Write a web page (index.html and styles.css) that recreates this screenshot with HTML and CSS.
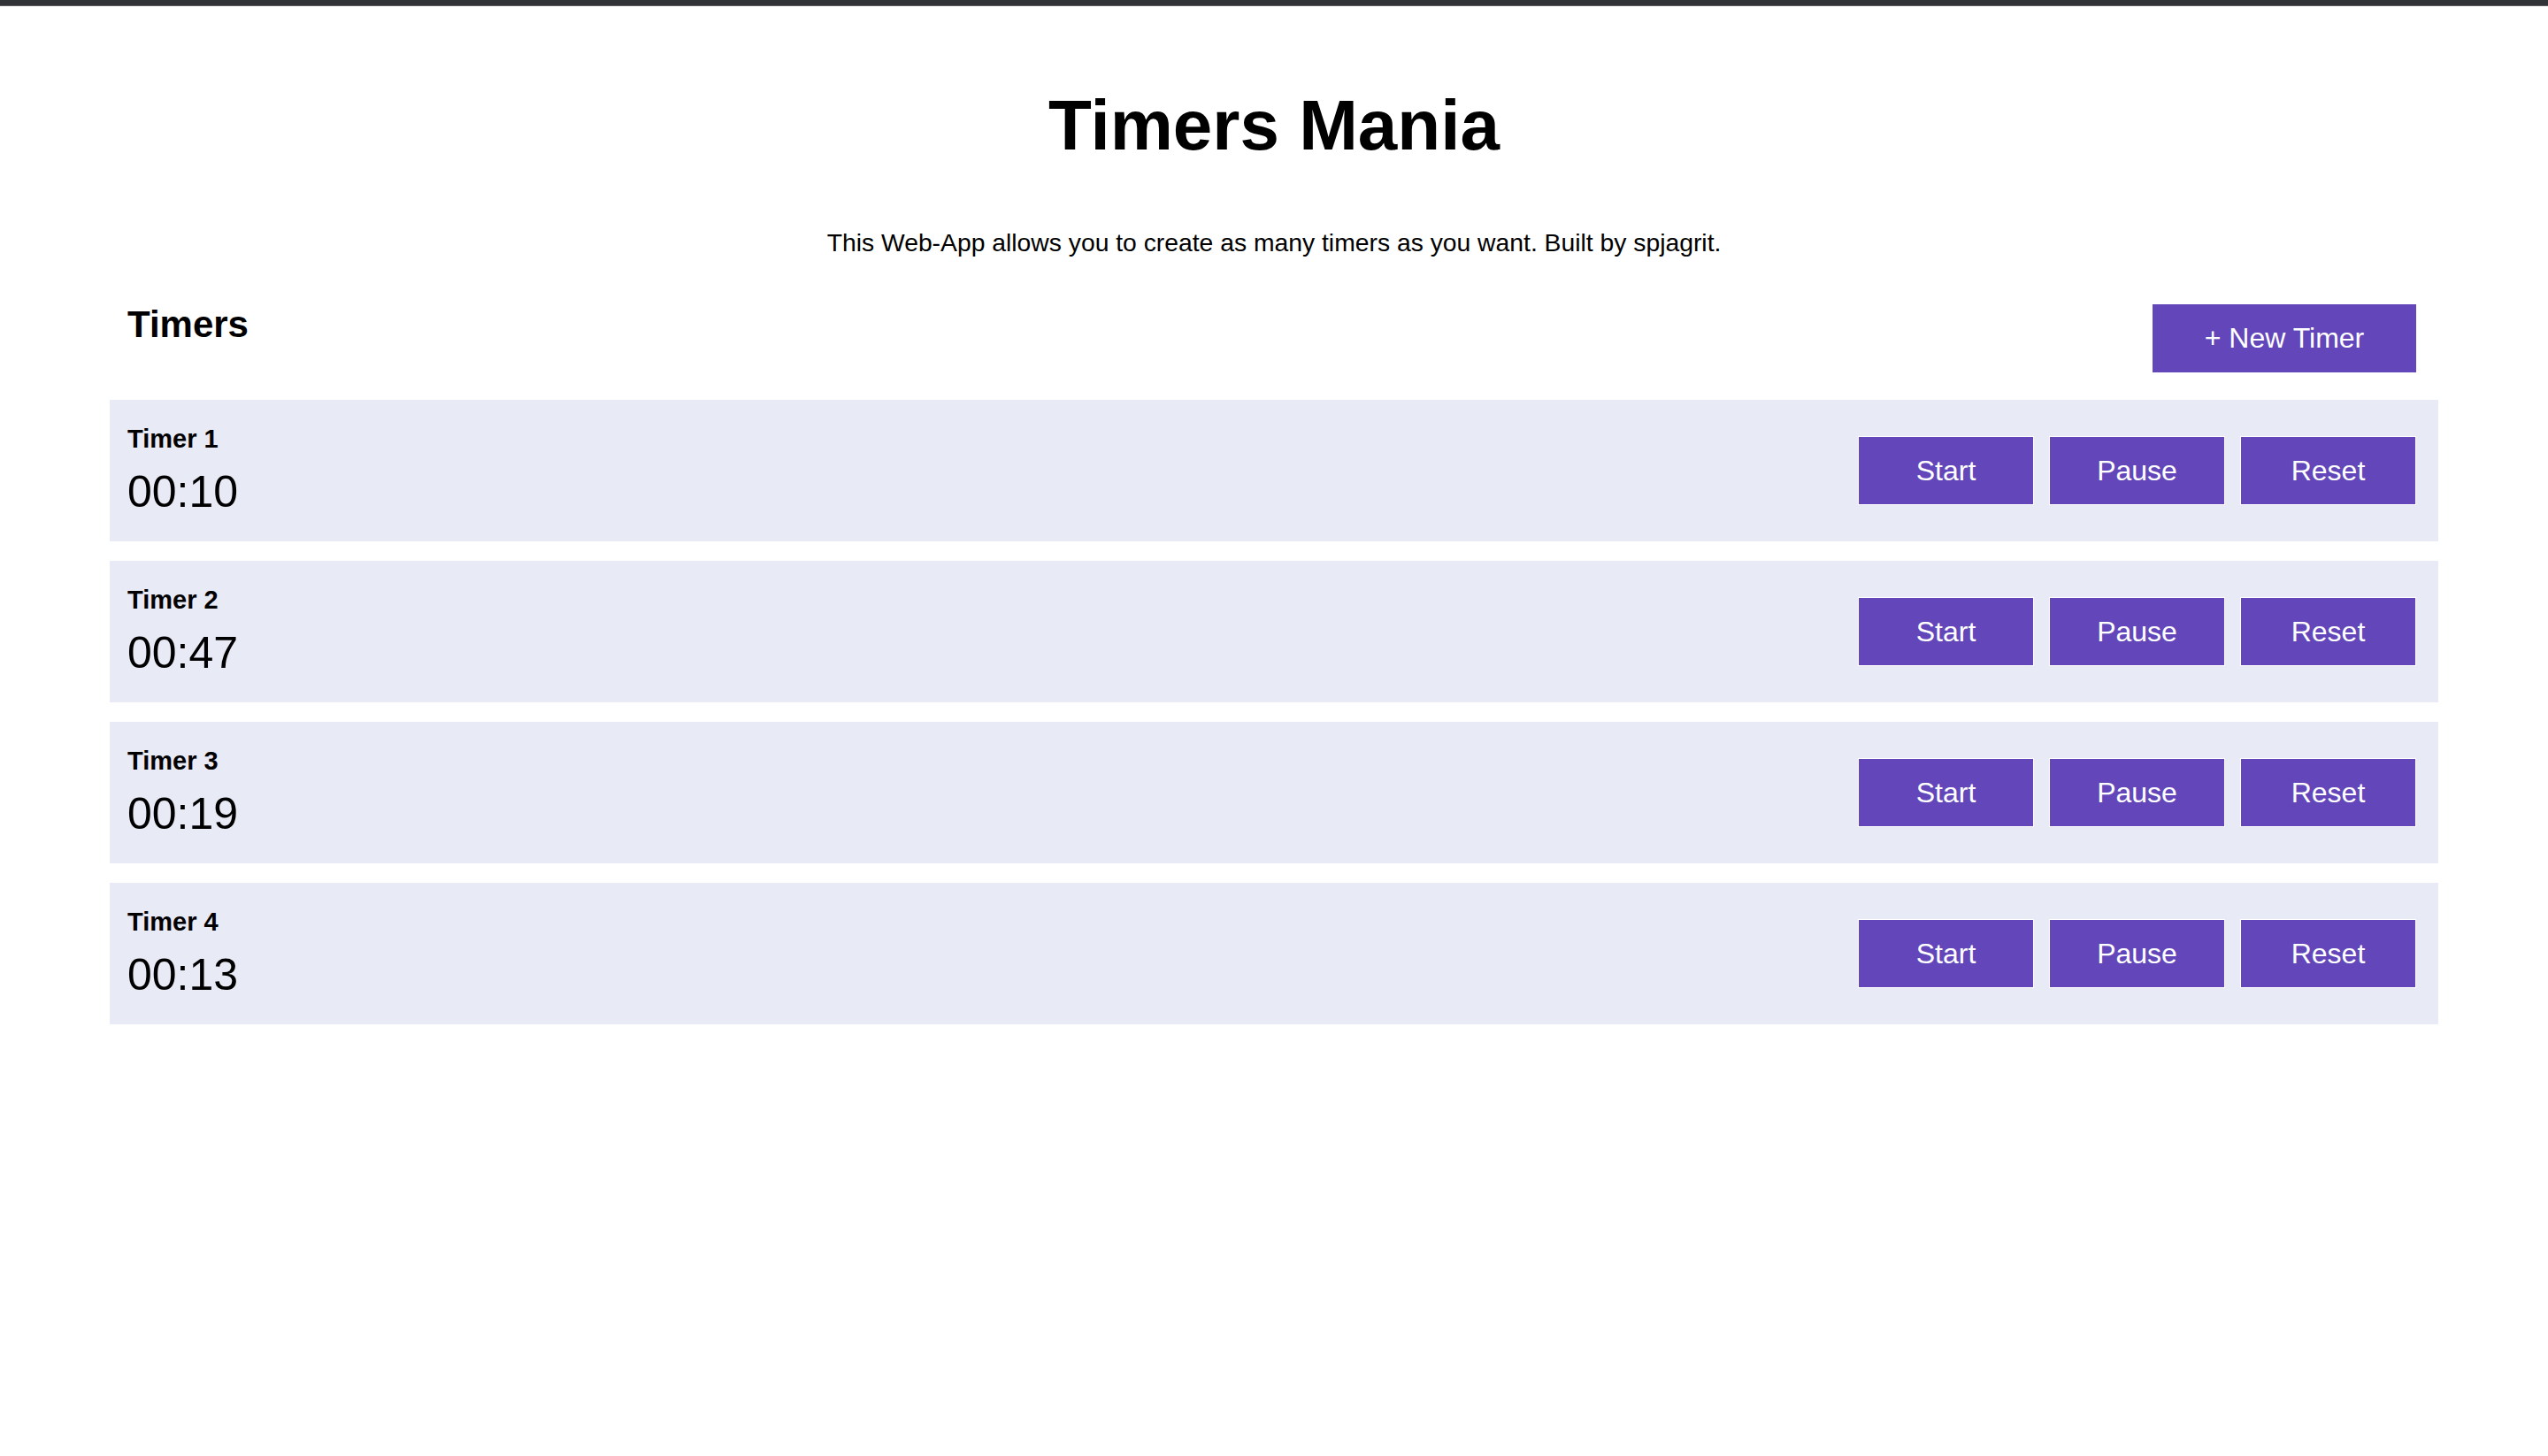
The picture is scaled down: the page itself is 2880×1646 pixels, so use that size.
FILE: index.html
```html
<!DOCTYPE html>
<html lang="en">
<head>
<meta charset="utf-8">
<title>Timers Mania</title>
<link rel="stylesheet" href="styles.css">
</head>
<body>
<div class="topbar"></div>
<h1 class="title">Timers Mania</h1>
<p class="subtitle">This Web-App allows you to create as many timers as you want. Built by spjagrit.</p>
<main class="container">
  <div class="header">
    <h2 class="heading">Timers</h2>
    <button class="btn btn-new">+ New Timer</button>
  </div>
  <div class="list">
    <div class="card">
      <div class="info">
        <div class="name">Timer 1</div>
        <div class="time">00:10</div>
      </div>
      <div class="actions">
        <button class="btn btn-act">Start</button>
        <button class="btn btn-act">Pause</button>
        <button class="btn btn-act">Reset</button>
      </div>
    </div>
    <div class="card">
      <div class="info">
        <div class="name">Timer 2</div>
        <div class="time">00:47</div>
      </div>
      <div class="actions">
        <button class="btn btn-act">Start</button>
        <button class="btn btn-act">Pause</button>
        <button class="btn btn-act">Reset</button>
      </div>
    </div>
    <div class="card">
      <div class="info">
        <div class="name">Timer 3</div>
        <div class="time">00:19</div>
      </div>
      <div class="actions">
        <button class="btn btn-act">Start</button>
        <button class="btn btn-act">Pause</button>
        <button class="btn btn-act">Reset</button>
      </div>
    </div>
    <div class="card">
      <div class="info">
        <div class="name">Timer 4</div>
        <div class="time">00:13</div>
      </div>
      <div class="actions">
        <button class="btn btn-act">Start</button>
        <button class="btn btn-act">Pause</button>
        <button class="btn btn-act">Reset</button>
      </div>
    </div>
  </div>
</main>
</body>
</html>
```

FILE: styles.css
```css
* { box-sizing: border-box; }

html, body {
  margin: 0;
  padding: 0;
  background: #ffffff;
  color: #000000;
  font-family: "Liberation Sans", Arial, Helvetica, sans-serif;
}

.topbar {
  height: 7px;
  background: #323336;
  border-bottom: 1px solid #5c5c60;
}

.title {
  margin: 89px 0 0;
  font-size: 80px;
  line-height: 92px;
  font-weight: 700;
  text-align: center;
}

.subtitle {
  margin: 70px 0 0;
  font-size: 28.3px;
  line-height: 32px;
  text-align: center;
}

.container {
  margin: 53px 124px 0;
}

.header {
  display: flex;
  justify-content: space-between;
  align-items: flex-start;
  padding: 0 25px 0 20px;
}

.heading {
  margin: 0;
  font-size: 42px;
  line-height: 48px;
  font-weight: 700;
}

.list {
  margin-top: 31px;
  display: flex;
  flex-direction: column;
  gap: 22px;
}

.card {
  height: 160px;
  background: #e8eaf6;
  display: flex;
  justify-content: space-between;
  align-items: center;
  padding: 0 25px 0 20px;
}

.info {
  display: flex;
  flex-direction: column;
}

.name {
  font-size: 29px;
  line-height: 32px;
  font-weight: 700;
}

.time {
  margin-top: 15px;
  font-size: 50px;
  line-height: 58px;
}

.actions {
  display: flex;
  gap: 17px;
}

.btn {
  margin: 0;
  padding: 0;
  background: #6347ba;
  color: #ffffff;
  font-family: "Liberation Sans", Arial, Helvetica, sans-serif;
  font-size: 32px;
  line-height: 37px;
  border: 1px solid #ffffff;
  border-radius: 0;
  cursor: pointer;
  display: flex;
  align-items: center;
  justify-content: center;
}

.btn-new {
  margin-top: 1px;
  width: 298px;
  height: 77px;
  border-color: #6347ba;
}

.btn-act {
  width: 199px;
  height: 78px;
}
```
